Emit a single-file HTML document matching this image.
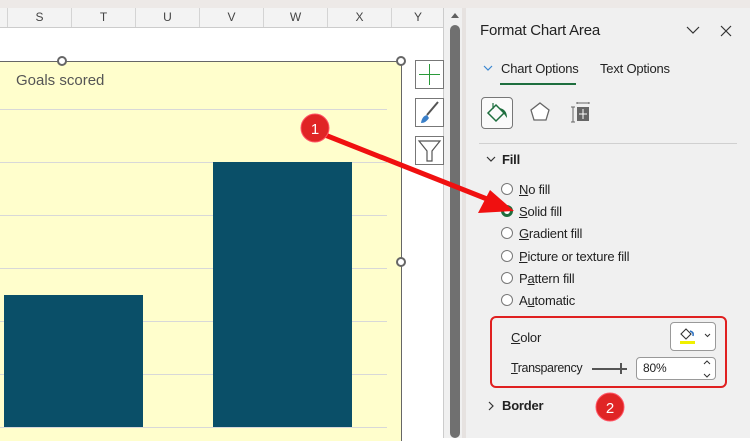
<!DOCTYPE html>
<html><head><meta charset="utf-8"><style>
*{margin:0;padding:0;box-sizing:border-box}
body{width:750px;height:438px;overflow:hidden;position:relative;background:#fff;font-family:"Liberation Sans",sans-serif}
.a{position:absolute}
.col{position:absolute;top:8px;height:19px;font-size:12px;color:#444;text-align:center;line-height:19px;border-right:1px solid #d4d4d4;width:64px}
.grid{position:absolute;left:0;width:387px;height:1px;background:#d8d8d8}
.h{position:absolute;width:10px;height:10px;border:2px solid #666;border-radius:50%;background:#fff}
.sb{position:absolute;left:415px;width:29px;height:29px;border:1px solid #777;background:#fff}
.p{position:absolute;font-size:13px;color:#222;letter-spacing:-0.2px}
.r{position:absolute;left:501px;width:12px;height:12px;border:1px solid #777;border-radius:50%;background:#fff}
</style></head><body>
<div class="a" style="left:0;top:0;width:750px;height:8px;background:#ede9e7"></div>
<div class="a" style="left:0;top:8px;width:444px;height:20px;background:#f3f3f3;border-bottom:1px solid #ccc"></div>
<div class="col" style="left:8px">S</div><div class="col" style="left:72px">T</div><div class="col" style="left:136px">U</div><div class="col" style="left:200px">V</div><div class="col" style="left:264px">W</div><div class="col" style="left:328px">X</div><div class="col" style="left:392px;border:none;width:52px">Y</div>
<div class="a" style="left:0;top:8px;width:8px;height:19px;border-right:1px solid #d4d4d4"></div>
<div class="a" style="left:443px;top:8px;width:23px;height:430px;background:#f0f0f0;border-left:1px solid #ccc"></div>
<div class="a" style="left:450px;top:25px;width:10px;height:413px;background:#707070;border-radius:5px"></div>
<div class="a" style="left:451px;top:13px;width:0;height:0;border-left:4px solid transparent;border-right:4px solid transparent;border-bottom:5px solid #606060"></div>
<div class="a" style="left:462px;top:8px;width:4px;height:430px;background:#e6e2e0"></div>
<div class="a" style="left:0;top:61px;width:402px;height:380px;background:#fffecc;border-top:1px solid #666;border-right:1px solid #666"></div>
<div class="a" style="left:16px;top:72px;font-size:15px;color:#555">Goals scored</div>
<div class="grid" style="top:109px"></div><div class="grid" style="top:162px"></div><div class="grid" style="top:215px"></div><div class="grid" style="top:268px"></div><div class="grid" style="top:321px"></div><div class="grid" style="top:374px"></div><div class="grid" style="top:427px"></div>
<div class="a" style="left:4px;top:295px;width:139px;height:132px;background:#0a4f68"></div>
<div class="a" style="left:213px;top:162px;width:139px;height:265px;background:#0a4f68"></div>
<div class="h" style="left:57px;top:56px"></div><div class="h" style="left:396px;top:56px"></div><div class="h" style="left:396px;top:257px"></div>
<div class="sb" style="top:60px"><div class="a" style="left:13px;top:3px;width:1px;height:21px;background:#2a9a3a"></div><div class="a" style="left:3px;top:13px;width:21px;height:1px;background:#2a9a3a"></div></div>
<div class="sb" style="top:98px"><svg width="27" height="27" class="a"><path d="M22 3 L11 16" stroke="#555" stroke-width="2"/><path d="M5 24 Q6 17 11 16 L13 19 Q10 24 5 24Z" fill="#3a7fc8"/></svg></div>
<div class="sb" style="top:136px"><svg width="27" height="27" class="a"><path d="M3 4 H24 L16 14 V24 H11 V14Z" fill="none" stroke="#555" stroke-width="1.2"/></svg></div>
<div class="a" style="left:466px;top:8px;width:284px;height:430px;background:#f0f0f0"></div>
<div class="p" style="left:480px;top:22px;font-size:15px">Format Chart Area</div>
<svg class="a" style="left:686px;top:26px" width="14" height="9"><path d="M1 1 L7 7 L13 1" fill="none" stroke="#333" stroke-width="1.2"/></svg>
<svg class="a" style="left:720px;top:25px" width="12" height="12"><path d="M1 1 L11 11 M11 1 L1 11" stroke="#333" stroke-width="1.2"/></svg>
<svg class="a" style="left:483px;top:65px" width="10" height="7"><path d="M1 1 L5 5 L9 1" fill="none" stroke="#3a86d0" stroke-width="1.2"/></svg>
<div class="p" style="left:501px;top:61px">Chart Options</div>
<div class="p" style="left:600px;top:61px">Text Options</div>
<div class="a" style="left:500px;top:83px;width:76px;height:2px;background:#1e6e3e"></div>
<div class="a" style="left:481px;top:97px;width:32px;height:32px;border:1px solid #777;border-radius:4px;background:#fafafa"></div>
<svg class="a" style="left:483px;top:99px" width="28" height="28"><path d="M5 14 L13 6 L21 14 L13 22Z" fill="none" stroke="#1e6e3e" stroke-width="1.5"/><path d="M16 9 Q24 10 24 19 Q21 15 19 12Z" fill="#1e6e3e"/><path d="M10 4 V10" stroke="#1e6e3e" stroke-width="1.2"/></svg>
<svg class="a" style="left:528px;top:100px" width="24" height="24"><path d="M12 3 L21 10 L18 20 H6 L3 10Z" fill="#fff" stroke="#666" stroke-width="1.3"/></svg>
<svg class="a" style="left:570px;top:100px" width="24" height="24"><path d="M7 3 H19 M7 2 V4 M19 2 V4 M1 7 H5 M3 7 V22 M1 22 H5" stroke="#666" stroke-width="1"/><rect x="7" y="7" width="12" height="14" fill="#666"/><path d="M13 9 V19 M9 14 H17" stroke="#fff" stroke-width="1"/></svg>
<div class="a" style="left:479px;top:143px;width:258px;height:1px;background:#d0d0d0"></div>
<svg class="a" style="left:486px;top:156px" width="10" height="7"><path d="M1 1 L5 5 L9 1" fill="none" stroke="#333" stroke-width="1.2"/></svg>
<div class="p" style="left:502px;top:152px;font-weight:bold">Fill</div>
<div class="r" style="top:183px"></div><div class="p" style="left:519px;top:182px"><u>N</u>o fill</div>
<div class="r" style="top:205px;border:3px solid #1e6e3e"></div><div class="p" style="left:519px;top:204px"><u>S</u>olid fill</div>
<div class="r" style="top:227px"></div><div class="p" style="left:519px;top:226px"><u>G</u>radient fill</div>
<div class="r" style="top:250px"></div><div class="p" style="left:519px;top:249px"><u>P</u>icture or texture fill</div>
<div class="r" style="top:272px"></div><div class="p" style="left:519px;top:271px">P<u>a</u>ttern fill</div>
<div class="r" style="top:294px"></div><div class="p" style="left:519px;top:293px">A<u>u</u>tomatic</div>
<div class="a" style="left:490px;top:316px;width:237px;height:72px;border:2px solid #e02020;border-radius:6px"></div>
<div class="p" style="left:511px;top:330px"><u>C</u>olor</div>
<div class="a" style="left:670px;top:322px;width:46px;height:29px;border:1px solid #999;border-radius:4px;background:#fff"></div>
<svg class="a" style="left:678px;top:327px" width="34" height="20"><path d="M3 7 L8 2 L13 7 L8 12Z" fill="none" stroke="#333" stroke-width="1.1"/><path d="M12 4 Q16 5 15 9" stroke="#2a6fc0" stroke-width="1.5" fill="none"/><rect x="2" y="14" width="15" height="3" fill="#f0f000"/><path d="M27 7 L29.5 9.5 L32 7" fill="none" stroke="#333" stroke-width="1"/></svg>
<div class="p" style="left:511px;top:361px;font-size:12.5px;letter-spacing:-0.4px"><u>T</u>ransparency</div>
<div class="a" style="left:592px;top:368px;width:35px;height:2px;background:#555"></div>
<div class="a" style="left:620px;top:363px;width:2px;height:11px;background:#555"></div>
<div class="a" style="left:636px;top:357px;width:80px;height:23px;border:1px solid #999;border-radius:4px;background:#fff"></div>
<div class="p" style="left:643px;top:361px;font-size:12px">80%</div>
<svg class="a" style="left:703px;top:360px" width="8" height="18"><path d="M1 4 L4 1 L7 4 M1 14 L4 17 L7 14" fill="none" stroke="#333" stroke-width="1"/></svg>
<svg class="a" style="left:488px;top:401px" width="7" height="10"><path d="M1 1 L5 5 L1 9" fill="none" stroke="#333" stroke-width="1.2"/></svg>
<div class="p" style="left:502px;top:398px;font-weight:bold">Border</div>
<svg class="a" style="left:0;top:0" width="750" height="438">
<path d="M320 133 L492 201" stroke="#f01010" stroke-width="5"/>
<path d="M514 211 L478 213 L490 190Z" fill="#f01010"/>
<circle cx="315" cy="128" r="14" fill="#e02525" stroke="#f56" stroke-width="1"/>
<circle cx="610" cy="407" r="14" fill="#e02525" stroke="#f56" stroke-width="1"/>
<text x="315" y="134" font-size="15" fill="#fff" text-anchor="middle" font-family="Liberation Sans">1</text>
<text x="610" y="413" font-size="15" fill="#fff" text-anchor="middle" font-family="Liberation Sans">2</text>
</svg>
</body></html>
